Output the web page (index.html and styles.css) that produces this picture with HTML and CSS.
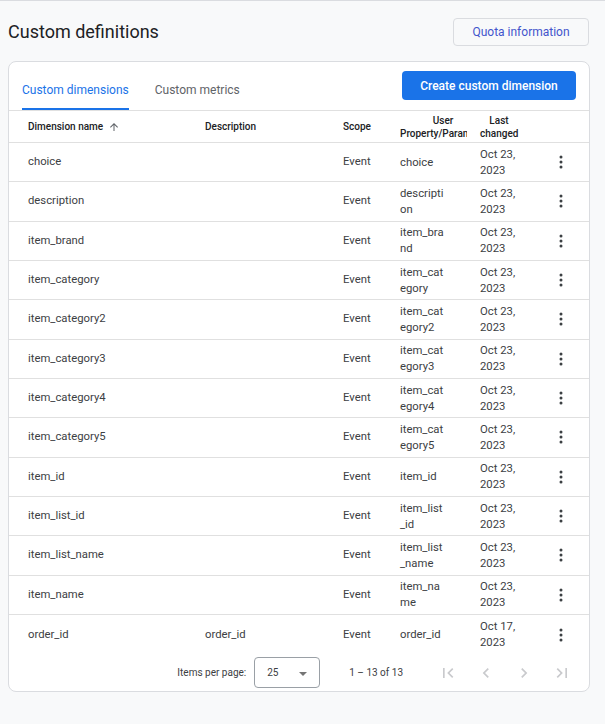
FILE: index.html
```html
<!DOCTYPE html>
<html lang="en">
<head>
<meta charset="utf-8">
<title>Custom definitions</title>
<link rel="stylesheet" href="styles.css">
</head>
<body>
<div class="page">
  <header class="top">
    <h1 class="title">Custom definitions</h1>
    <button class="quota">Quota information</button>
  </header>
  <section class="card">
    <div class="tabbar">
      <div class="tab active">Custom dimensions</div>
      <div class="tab">Custom metrics</div>
      <button class="create">Create custom dimension</button>
    </div>
    <div class="table">
      <div class="row head">
        <div class="sortcell">Dimension name <svg class="sort" viewBox="0 0 24 24"><path d="M4 12l1.41 1.41L11 7.83V20h2V7.83l5.58 5.59L20 12l-8-8-8 8z"/></svg></div>
        <div>Description</div>
        <div>Scope</div>
        <div class="uclip"><div class="uin"><span class="ln">User</span><span class="ln">Property/Parameter</span></div></div>
        <div><div class="lhead">Last changed</div></div>
        <div></div>
      </div>
      <div class="row"><div>choice</div><div></div><div>Event</div><div class="param">choice</div><div class="date">Oct 23, 2023</div><div><svg class="kebab" viewBox="0 0 4 14"><circle cx="2" cy="2" r="1.5"/><circle cx="2" cy="7" r="1.5"/><circle cx="2" cy="12" r="1.5"/></svg></div></div>
      <div class="row"><div>description</div><div></div><div>Event</div><div class="param">description</div><div class="date">Oct 23, 2023</div><div><svg class="kebab" viewBox="0 0 4 14"><circle cx="2" cy="2" r="1.5"/><circle cx="2" cy="7" r="1.5"/><circle cx="2" cy="12" r="1.5"/></svg></div></div>
      <div class="row"><div>item_brand</div><div></div><div>Event</div><div class="param">item_brand</div><div class="date">Oct 23, 2023</div><div><svg class="kebab" viewBox="0 0 4 14"><circle cx="2" cy="2" r="1.5"/><circle cx="2" cy="7" r="1.5"/><circle cx="2" cy="12" r="1.5"/></svg></div></div>
      <div class="row"><div>item_category</div><div></div><div>Event</div><div class="param">item_category</div><div class="date">Oct 23, 2023</div><div><svg class="kebab" viewBox="0 0 4 14"><circle cx="2" cy="2" r="1.5"/><circle cx="2" cy="7" r="1.5"/><circle cx="2" cy="12" r="1.5"/></svg></div></div>
      <div class="row"><div>item_category2</div><div></div><div>Event</div><div class="param">item_category2</div><div class="date">Oct 23, 2023</div><div><svg class="kebab" viewBox="0 0 4 14"><circle cx="2" cy="2" r="1.5"/><circle cx="2" cy="7" r="1.5"/><circle cx="2" cy="12" r="1.5"/></svg></div></div>
      <div class="row"><div>item_category3</div><div></div><div>Event</div><div class="param">item_category3</div><div class="date">Oct 23, 2023</div><div><svg class="kebab" viewBox="0 0 4 14"><circle cx="2" cy="2" r="1.5"/><circle cx="2" cy="7" r="1.5"/><circle cx="2" cy="12" r="1.5"/></svg></div></div>
      <div class="row"><div>item_category4</div><div></div><div>Event</div><div class="param">item_category4</div><div class="date">Oct 23, 2023</div><div><svg class="kebab" viewBox="0 0 4 14"><circle cx="2" cy="2" r="1.5"/><circle cx="2" cy="7" r="1.5"/><circle cx="2" cy="12" r="1.5"/></svg></div></div>
      <div class="row"><div>item_category5</div><div></div><div>Event</div><div class="param">item_category5</div><div class="date">Oct 23, 2023</div><div><svg class="kebab" viewBox="0 0 4 14"><circle cx="2" cy="2" r="1.5"/><circle cx="2" cy="7" r="1.5"/><circle cx="2" cy="12" r="1.5"/></svg></div></div>
      <div class="row"><div>item_id</div><div></div><div>Event</div><div class="param">item_id</div><div class="date">Oct 23, 2023</div><div><svg class="kebab" viewBox="0 0 4 14"><circle cx="2" cy="2" r="1.5"/><circle cx="2" cy="7" r="1.5"/><circle cx="2" cy="12" r="1.5"/></svg></div></div>
      <div class="row"><div>item_list_id</div><div></div><div>Event</div><div class="param">item_list_id</div><div class="date">Oct 23, 2023</div><div><svg class="kebab" viewBox="0 0 4 14"><circle cx="2" cy="2" r="1.5"/><circle cx="2" cy="7" r="1.5"/><circle cx="2" cy="12" r="1.5"/></svg></div></div>
      <div class="row"><div>item_list_name</div><div></div><div>Event</div><div class="param">item_list_name</div><div class="date">Oct 23, 2023</div><div><svg class="kebab" viewBox="0 0 4 14"><circle cx="2" cy="2" r="1.5"/><circle cx="2" cy="7" r="1.5"/><circle cx="2" cy="12" r="1.5"/></svg></div></div>
      <div class="row"><div>item_name</div><div></div><div>Event</div><div class="param">item_name</div><div class="date">Oct 23, 2023</div><div><svg class="kebab" viewBox="0 0 4 14"><circle cx="2" cy="2" r="1.5"/><circle cx="2" cy="7" r="1.5"/><circle cx="2" cy="12" r="1.5"/></svg></div></div>
      <div class="row"><div>order_id</div><div>order_id</div><div>Event</div><div class="param">order_id</div><div class="date">Oct 17, 2023</div><div><svg class="kebab" viewBox="0 0 4 14"><circle cx="2" cy="2" r="1.5"/><circle cx="2" cy="7" r="1.5"/><circle cx="2" cy="12" r="1.5"/></svg></div></div>
    </div>
    <div class="footer">
      <span class="ipp">Items per page:</span>
      <div class="select"><span>25</span><span class="caret"></span></div>
      <span class="range">1 – 13 of 13</span>
      <div class="pager">
        <span class="pbtn"><svg viewBox="0 0 24 24"><path d="M18.41 16.59L13.82 12l4.59-4.59L17 6l-6 6 6 6zM6 6h2v12H6z"/></svg></span>
        <span class="pbtn"><svg viewBox="0 0 24 24"><path d="M15.41 7.41L14 6l-6 6 6 6 1.41-1.41L10.83 12z"/></svg></span>
        <span class="pbtn"><svg viewBox="0 0 24 24"><path d="M10 6L8.59 7.41 13.17 12l-4.58 4.59L10 18l6-6z"/></svg></span>
        <span class="pbtn"><svg viewBox="0 0 24 24"><path d="M5.59 7.41L10.18 12l-4.59 4.59L7 18l6-6-6-6zM16 6h2v12h-2z"/></svg></span>
      </div>
    </div>
  </section>
</div>
</body>
</html>
```

FILE: styles.css
```css
* { box-sizing: border-box; }
html, body { margin: 0; }
body {
  background: #f8f9fa;
  border-top: 1px solid #dadce0;
  font-family: Roboto, "Liberation Sans", Arial, sans-serif;
  color: #3c4043;
  min-height: 724px;
}
.page { padding: 0 15px 0 8px; }
.top {
  display: flex;
  justify-content: space-between;
  align-items: center;
  padding-top: 17px;
}
.title {
  margin: 0;
  font-size: 18px;
  font-weight: 400;
  color: #202124;
  line-height: 24px;
}
.quota {
  height: 28px;
  width: 136px;
  margin-right: 1px;
  border: 1px solid #dadce0;
  border-radius: 4px;
  background: #f8f9fa;
  color: #4355cc;
  font-family: Roboto, "Liberation Sans", Arial, sans-serif;
  font-size: 12px;
  font-weight: 400;
  padding: 0;
}
.card {
  margin-top: 15px;
  background: #fff;
  border: 1px solid #dadce0;
  border-radius: 8px;
  overflow: hidden;
}
.tabbar {
  display: flex;
  align-items: flex-end;
  height: 49px;
  padding: 0 13px;
  border-bottom: 1px solid #e0e0e0;
}
.tab {
  font-size: 12px;
  line-height: 16px;
  color: #5f6368;
  height: 38px;
  padding-top: 10px;
  border-bottom: 2px solid transparent;
}
.tab.active { color: #1a73e8; border-bottom-color: #1a73e8; }
.tab + .tab { margin-left: 26px; }
.create {
  margin-left: auto;
  align-self: flex-start;
  margin-top: 9px;
  height: 29px;
  width: 174px;
  padding: 0;
  border: 0;
  border-radius: 4px;
  background: #1a73e8;
  color: #fff;
  font-family: Roboto, "Liberation Sans", Arial, sans-serif;
  font-size: 12px;
  font-weight: 500;
}
.row {
  display: grid;
  grid-template-columns: 177px 138px 57px 80px 65px 1fr;
  align-items: center;
  padding-left: 19px;
  height: 39.33px;
  border-bottom: 1px solid #e0e0e0;
  font-size: 11.3px;
  line-height: 16px;
  color: #3c4043;
}
.row:last-child { border-bottom: 0; }
.row.head {
  height: 32px;
  font-size: 10px;
  line-height: 13px;
  font-weight: 500;
  color: #202124;
}
.sortcell { display: flex; align-items: center; }
.sort { width: 12px; height: 12px; fill: #5f6368; margin-left: 5px; }
.uclip { width: 67px; overflow: hidden; }
.uin { width: 86px; text-align: center; }
.ln { display: block; white-space: nowrap; }
.lhead { width: 38px; text-align: center; }
.param { width: 46px; word-break: break-all; padding-top: 1px; }
.date { width: 50px; padding-top: 1px; }
.kebab { display: block; width: 4px; height: 14px; margin-left: 14px; fill: #3c4043; }
.footer {
  display: flex;
  align-items: center;
  justify-content: flex-end;
  height: 37px;
  padding-right: 8px;
  font-size: 10px;
  color: #3c4043;
}
.ipp { margin-right: 8px; }
.select {
  display: flex;
  align-items: center;
  width: 66px;
  height: 31px;
  padding-left: 12px;
  border: 1px solid #9aa0a6;
  border-radius: 4px;
}
.caret {
  margin-left: auto;
  margin-right: 12px;
  margin-top: 3px;
  width: 0;
  height: 0;
  border-left: 4px solid transparent;
  border-right: 4px solid transparent;
  border-top: 4px solid #757575;
}
.range { margin-left: 29px; margin-right: 26px; }
.pager { display: flex; }
.pbtn { width: 38px; display: flex; justify-content: center; }
.pbtn svg { width: 20px; height: 20px; fill: #c9cacd; }
```
